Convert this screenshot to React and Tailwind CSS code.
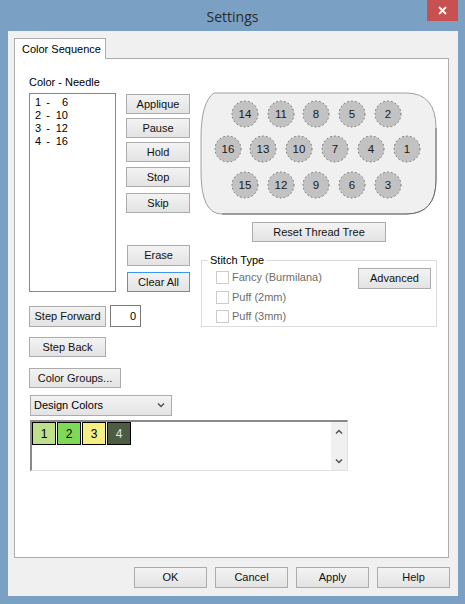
import React from 'react';

const Btn = ({ children, className = '', focused = false }) => (
  <button
    className={`flex items-center justify-center border bg-linear-to-b from-[#F3F3F3] to-[#E3E3E3] text-[11px] leading-none text-[#111] ${
      focused ? 'border-[#3C9BE8]' : 'border-[#ACACAC]'
    } ${className}`}
  >
    {children}
  </button>
);

const Check = ({ label, h = 'h-[20px]' }) => (
  <div className={`flex items-center ${h}`}>
    <span className="w-[13px] h-[13px] border border-[#CCCCCC] bg-white" />
    <span className="ml-[3px] text-[11px] text-[#6D6D6D]">{label}</span>
  </div>
);

const needleRows = [
  { y: 22, items: [[45, 14], [81, 11], [116, 8], [152, 5], [188, 2]] },
  { y: 57, items: [[28, 16], [63, 13], [99, 10], [135, 7], [171, 4], [207, 1]] },
  { y: 93, items: [[45, 15], [81, 12], [116, 9], [152, 6], [188, 3]] },
];

const NeedlePlate = () => (
  <svg width="237" height="123" viewBox="0 0 237 123" className="block">
    <path
      d="M14 1 L206 1 Q236 1 236 36 L236 88 Q236 122 206 122 L22 122 Q1 122 1 80 L1 46 Q1 10 14 1 Z"
      fill="#F0F0F0"
      stroke="#A0A0A0"
      strokeWidth="1"
    />
    <path
      d="M236 36 L236 88 Q236 122 206 122 L22 122"
      fill="none"
      stroke="#6E6E6E"
      strokeWidth="1"
    />
    {needleRows.map((row) =>
      row.items.map(([x, n]) => (
        <g key={n}>
          <circle cx={x} cy={row.y} r="13" fill="#C2C2C2" stroke="#707070" strokeWidth="1" strokeDasharray="1.5 2.5" />
          <text
            x={x}
            y={row.y + 4}
            textAnchor="middle"
            fontSize="11.5"
            fontFamily="Liberation Sans, Arial, sans-serif"
            fill="#1A1A1A"
          >
            {n}
          </text>
        </g>
      ))
    )}
  </svg>
);

const Chevron = ({ up = false }) => (
  <svg width="8" height="5" viewBox="0 0 8 5">
    <path
      d={up ? 'M1 4.5 L4 1.5 L7 4.5' : 'M1 0.5 L4 3.5 L7 0.5'}
      fill="none"
      stroke="#555"
      strokeWidth="1.5"
    />
  </svg>
);

const listItems = [
  ['1', '6'],
  ['2', '10'],
  ['3', '12'],
  ['4', '16'],
];

const swatches = [
  { n: 1, bg: 'bg-[#BEE08C]', fg: 'text-black' },
  { n: 2, bg: 'bg-[#7DD956]', fg: 'text-black' },
  { n: 3, bg: 'bg-[#F5EE82]', fg: 'text-black' },
  { n: 4, bg: 'bg-[#4D5B42]', fg: 'text-[#DCE6F2]' },
];

export default function App() {
  return (
    <div className="w-[465px] h-[604px] bg-[#7AA0C4] flex flex-col font-['Liberation_Sans',Arial,sans-serif]">
      {/* title bar */}
      <div className="h-[31px] relative flex items-center justify-center">
        <span className="font-['Open_Sans',sans-serif] text-[14px] text-[#2B2B2B] mt-[1px]">Settings</span>
        <div className="absolute top-0 right-[7px] w-[31px] h-[21px] bg-[#C75050] flex items-center justify-center">
          <svg width="9" height="9" viewBox="0 0 9 9">
            <path d="M1 1 L8 8 M8 1 L1 8" stroke="#fff" strokeWidth="1.8" />
          </svg>
        </div>
      </div>

      {/* client area */}
      <div className="ml-[8px] w-[450px] h-[565px] bg-[#F0F0F0] flex flex-col">
        <div className="pl-[6px] pt-[7px]">
          <div className="relative z-10 w-[92px] h-[21px] -mb-px border border-b-0 border-[#ADADAD] bg-white flex items-center pl-[7px] text-[11px] text-black">
            Color Sequence
          </div>
          <div className="w-[435px] h-[500px] border border-[#ADADAD] bg-white pl-[14px] pt-[16px]">
            <div className="flex items-start">
              {/* left column */}
              <div className="w-[162px] flex flex-col">
                <div className="h-[14px] leading-[14px] text-[11px] text-black">Color - Needle</div>
                <div className="flex items-start mt-[4px]">
                  <div className="w-[87px] h-[199px] border border-[#828790] bg-white pt-[2px] pl-[5px]">
                    {listItems.map(([c, n]) => (
                      <div key={c} className="flex h-[13px] leading-[13px] text-[11px] text-black">
                        <span className="w-[6px]">{c}</span>
                        <span className="w-[14px] text-center">-</span>
                        <span className="w-[13px] text-right">{n}</span>
                      </div>
                    ))}
                  </div>
                  <div className="ml-[10px] w-[64px] flex flex-col">
                    <Btn className="mt-[1px] h-[20px]">Applique</Btn>
                    <Btn className="mt-[4px] h-[20px]">Pause</Btn>
                    <Btn className="mt-[4px] h-[20px]">Hold</Btn>
                    <Btn className="mt-[5px] h-[20px]">Stop</Btn>
                    <Btn className="mt-[6px] h-[20px]">Skip</Btn>
                    <Btn className="mt-[32px] h-[21px] ml-px">Erase</Btn>
                    <Btn className="mt-[6px] h-[20px] ml-px" focused>Clear All</Btn>
                  </div>
                </div>
                <div className="flex items-start mt-[13px]">
                  <Btn className="mt-px w-[77px] h-[21px]">Step Forward</Btn>
                  <div className="ml-[4px] w-[31px] h-[22px] border border-[#7A7A7A] bg-white text-right pr-[4px] pt-[2px] text-[11px] text-black">
                    0
                  </div>
                </div>
                <Btn className="mt-[10px] w-[77px] h-[20px]">Step Back</Btn>
                <Btn className="mt-[11px] w-[92px] h-[20px]">Color Groups...</Btn>
              </div>

              {/* right column */}
              <div className="ml-[9px] mt-[17px] w-[237px] flex flex-col">
                <NeedlePlate />
                <Btn className="ml-[52px] mt-[7px] w-[134px] h-[20px]">Reset Thread Tree</Btn>
                <fieldset className="mt-[11px] ml-px w-[236px] border border-[#DCDCDC]">
                  <legend className="ml-[6px] px-[2px] text-[11px] leading-[14px] text-black">Stitch Type</legend>
                  <div className="flex justify-between pl-[14px] pr-[5px]">
                    <div className="flex flex-col">
                      <Check label="Fancy (Burmilana)" />
                      <Check label="Puff (2mm)" />
                      <Check label="Puff (3mm)" h="h-[19px]" />
                    </div>
                    <Btn className="mt-px w-[73px] h-[21px]">Advanced</Btn>
                  </div>
                </fieldset>
              </div>
            </div>

            {/* dropdown */}
            <div className="mt-[7px] ml-px w-[142px] h-[21px] border border-[#ACACAC] bg-linear-to-b from-[#F3F3F3] to-[#E3E3E3] flex items-center justify-between pl-[3px] pr-[6px] text-[11px] text-black">
              <span>Design Colors</span>
              <Chevron />
            </div>

            {/* color swatches */}
            <div className="mt-[4px] ml-px w-[318px] h-[51px] border-t-2 border-l-2 border-r border-b border-t-[#8A8A8A] border-l-[#8A8A8A] border-r-[#E3E3E3] border-b-[#E3E3E3] bg-white flex">
              <div className="flex-1 flex items-start gap-[1px]">
                {swatches.map((s) => (
                  <div
                    key={s.n}
                    className={`w-[24px] h-[23px] border border-black flex items-center justify-center text-[12px] ${s.bg} ${s.fg}`}
                  >
                    {s.n}
                  </div>
                ))}
              </div>
              <div className="w-[16px] bg-[#F0F0F0] flex flex-col items-center justify-between pt-[7px] pb-[6px]">
                <Chevron up />
                <Chevron />
              </div>
            </div>
          </div>
        </div>

        {/* dialog buttons */}
        <div className="flex justify-end gap-[8px] pr-[8px] mt-[9px]">
          <Btn className="w-[73px] h-[21px]">OK</Btn>
          <Btn className="w-[73px] h-[21px]">Cancel</Btn>
          <Btn className="w-[73px] h-[21px]">Apply</Btn>
          <Btn className="w-[73px] h-[21px]">Help</Btn>
        </div>
      </div>
    </div>
  );
}
